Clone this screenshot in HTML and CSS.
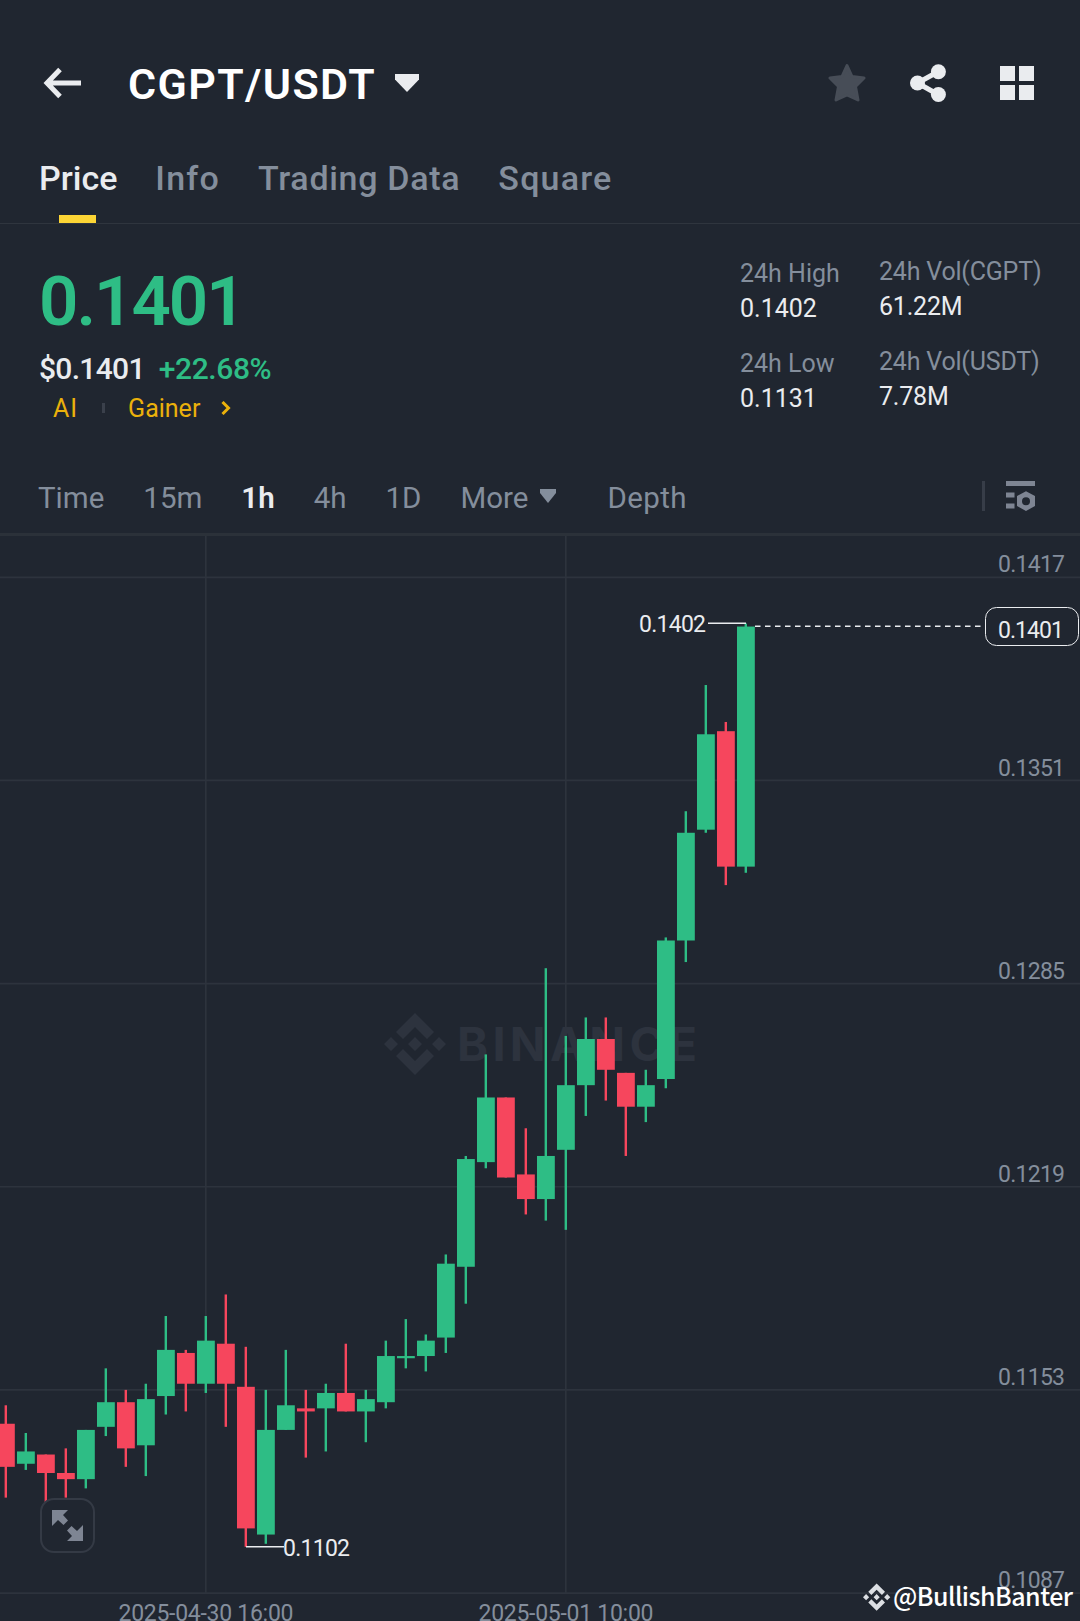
FILE: index.html
```html
<!DOCTYPE html>
<html lang="en">
<head>
    <meta charset="UTF-8">
    <meta name="viewport" content="width=device-width, initial-scale=1.0">
    <title>CGPT/USDT</title>
    <link rel="stylesheet" href="styles.css">
</head>

<body>
    <header class="topbar">
        <svg class="back" width="38" height="32" viewBox="0 0 38 32">
            <path d="M17 2.500 4 16l13 13.500M4 16h34" fill="none" stroke="#eaecef" stroke-width="5"/>
        </svg>
        <h1 class="pair">CGPT/USDT</h1>
        <svg class="pair-caret" width="24" height="18" viewBox="0 0 24 18">
            <path d="M0 0h24v5.500L12 18 0 5.500z" fill="#eaecef"/>
        </svg>
        <div class="actions">
            <svg width="38" height="40" viewBox="0 0 38 40">
                <path d="M19 2.500 24 13.500 36 15 27.500 23.500 30 37 19 32 8 37 10.500 23.500 2 15 14 13.500z" fill="#474d57" stroke="#474d57" stroke-width="3" stroke-linejoin="round"/>
            </svg>
            <svg width="38" height="40" viewBox="0 0 38 40">
                <path d="M29 8.700 8.500 20 29 31.500" fill="none" stroke="#eaecef" stroke-width="5"/>
                <circle cx="29.400" cy="8.700" r="7.500" fill="#eaecef"/>
                <circle cx="8.500" cy="20" r="7.500" fill="#eaecef"/>
                <circle cx="29.400" cy="31.500" r="7.500" fill="#eaecef"/>
            </svg>
            <svg class="layout" width="34" height="34" viewBox="0 0 34 34">
                <path d="M0 0h15v15H0zM19 0h15v15H19zM0 19h15v15H0zM19 19h15v15H19z" fill="#eaecef"/>
            </svg>
        </div>
    </header>

    <nav class="tabs">
        <a class="tab active">Price</a>
        <a class="tab info">Info</a>
        <a class="tab">Trading Data</a>
        <a class="tab square">Square</a>
    </nav>

    <section class="ticker">
        <div class="quote">
            <div class="last-price">0.1401</div>
            <div class="sub-price">
                <span class="usd">$0.1401</span>
                <span class="change">+22.68%</span>
            </div>
            <div class="tags">
                <span class="tag-ai">AI</span>
                <i class="tag-divider"></i>
                <span class="tag-gainer">Gainer</span>
                <svg width="10" height="14" viewBox="0 0 10 14">
                    <path d="M1.500 1 7.500 7l-6 6" fill="none" stroke="#ebb10b" stroke-width="3"/>
                </svg>
            </div>
        </div>
        <div class="stats">
            <div class="stat-col">
                <p class="label">24h High</p>
                <p class="value">0.1402</p>
                <p class="label">24h Low</p>
                <p class="value">0.1131</p>
            </div>
            <div class="stat-col vol">
                <p class="label">24h Vol(CGPT)</p>
                <p class="value">61.22M</p>
                <p class="label">24h Vol(USDT)</p>
                <p class="value">7.78M</p>
            </div>
        </div>
    </section>

    <div class="intervals">
        <span>Time</span>
        <span>15m</span>
        <span class="active">1h</span>
        <span>4h</span>
        <span>1D</span>
        <span class="more">More
            <svg width="16" height="14" viewBox="0 0 16 14">
                <path d="M0 0h16v4L8 14 0 4z" fill="#848e9c"/>
            </svg>
        </span>
        <span class="depth">Depth</span>
        <div class="tools">
            <i class="divider"></i>
            <svg width="30" height="30" viewBox="0 0 30 30">
                <path d="M0 0h29v5H0zM0 11.500h8.500v5H0zM0 22.500h8.500v5H0z" fill="#7e8593"/>
                <path d="M20 10.200 29 15v10l-9 5-9-5V15zM20 16.200a4 4 0 1 0 0 8 4 4 0 0 0 0-8z" fill="#7e8593" fill-rule="evenodd"/>
            </svg>
        </div>
    </div>

    <main class="chart">
        <svg width="1080" height="1085" viewBox="0 536 1080 1085">
            <g id="grid" class="grid"></g>
            <g class="watermark">
                <path d="M415 1013l19 19-7 7-12-12-12 12-7-7zM415 1075l19-19-7-7-12 12-12-12-7 7zM391 1037l7 7-7 7-7-7zM439 1037l7 7-7 7-7-7zM415 1037l7 7-7 7-7-7z"/>
                <text x="457" y="1061" textLength="240">BINANCE</text>
            </g>
            <g id="candles"></g>
            <g id="axis" class="axis"></g>
            <g class="marks">
                <path d="M708 623.300h38M246 1546.800h38"/>
                <path d="M755 626.300h230" class="dashed"/>
                <text x="639" y="632" textLength="67">0.1402</text>
                <text x="283" y="1556" textLength="67">0.1102</text>
                <rect x="985.500" y="607.500" width="93" height="38" rx="11"/>
                <text x="998" y="638" textLength="66">0.1401</text>
            </g>
            <g class="expand">
                <rect x="41" y="1499" width="53" height="53" rx="13"/>
                <path d="M52 1510h16l-5 5 5 5.500-4.500 4.500-5.500-5-6 6zM83 1541h-16l5-5-5-5.500 4.500-4.500 5.500 5 6-6z"/>
            </g>
            <g class="author">
                <path transform="translate(863 1583.500) scale(.44)" d="M31 0l19 19-7 7-12-12-12 12-7-7zM31 62l19-19-7-7-12 12-12-12-7 7zM7 24l7 7-7 7-7-7zM55 24l7 7-7 7-7-7zM31 24l7 7-7 7-7-7z"/>
                <text x="893" y="1606" textLength="180">@BullishBanter</text>
            </g>
        </svg>
    </main>

    <script>
        // [open, high, low, close] in ticks of 0.0001
        const candles = [
            [1142, 1148, 1118, 1128], [1129, 1139, 1127, 1133], [1132, 1132, 1114, 1126],
            [1126, 1134, 1118, 1124], [1124, 1140, 1121, 1140], [1141, 1160, 1138, 1149],
            [1149, 1153, 1128, 1134], [1135, 1155, 1125, 1150], [1151, 1177, 1145, 1166],
            [1165, 1166, 1146, 1155], [1155, 1177, 1152, 1169], [1168, 1184, 1141, 1155],
            [1154, 1167, 1102, 1108], [1106, 1153, 1103, 1140], [1140, 1166, 1140, 1148],
            [1147, 1153, 1131, 1146], [1147, 1155, 1133, 1152], [1152, 1168, 1146, 1146],
            [1146, 1153, 1136, 1150], [1149, 1169, 1147, 1164], [1164, 1176, 1160, 1164],
            [1164, 1171, 1159, 1169], [1170, 1197, 1165, 1194], [1193, 1229, 1181, 1228],
            [1227, 1262, 1225, 1248], [1248, 1248, 1222, 1222], [1223, 1238, 1210, 1215],
            [1215, 1290, 1208, 1229], [1231, 1268, 1205, 1252], [1252, 1274, 1242, 1267],
            [1267, 1274, 1247, 1257], [1256, 1256, 1229, 1245], [1245, 1257, 1240, 1252],
            [1254, 1300, 1251, 1299], [1299, 1341, 1292, 1334], [1335, 1382, 1334, 1366],
            [1367, 1370, 1317, 1323], [1323, 1402, 1321, 1401]
        ];

        const y = tick => 577.3 + (1417 - tick) * 3.078;

        let bars = '';
        candles.forEach(([open, high, low, close], i) => {
            const x = 5.8 + i * 20;
            const color = close >= open ? '#2ebd85' : '#f6465d';
            const top = y(Math.max(open, close));
            const height = Math.max(2.2, y(Math.min(open, close)) - top);
            bars += `<rect x="${x - 1.2}" y="${y(high)}" width="2.4" height="${y(low) - y(high)}" fill="${color}"/>`;
            bars += `<rect x="${x - 8.8}" y="${top}" width="17.8" height="${height}" fill="${color}"/>`;
        });
        document.getElementById('candles').innerHTML = bars;

        let grid = '<path d="M205.800 536V1593M565.800 536V1593"/>';
        let axis = '';
        for (let tick = 1417; tick >= 1087; tick -= 66) {
            grid += `<path d="M0 ${y(tick)}H1080"/>`;
            axis += `<text x="998" y="${y(tick) - 4.9}" textLength="67">0.${tick}</text>`;
        }
        axis += '<text x="118.500" y="1621" textLength="175">2025-04-30 16:00</text>';
        axis += '<text x="478.500" y="1621" textLength="175">2025-05-01 10:00</text>';
        document.getElementById('grid').innerHTML = grid;
        document.getElementById('axis').innerHTML = axis;
    </script>
</body>

</html>
```
FILE: styles.css
```css
* {
    box-sizing: border-box;
}

body {
    margin: 0;
    width: 1080px;
    height: 1621px;
    overflow: hidden;
    background-color: #202630;
    color: #eaecef;
    font-family: Roboto, "Liberation Sans", sans-serif;
}

h1, p {
    margin: 0;
}

svg {
    display: block;
    flex: none;
}

.topbar {
    display: flex;
    align-items: center;
    height: 148px;
    padding: 18px 46px 0 43px;
}

.pair {
    width: 267px;
    padding-top: 2px;
    margin-left: 47px;
    font-size: 43px;
    font-weight: 600;
    letter-spacing: 1.4px;
    color: #fff;
    white-space: nowrap;
}

.actions {
    display: flex;
    align-items: center;
    margin-left: auto;
    gap: 43px;
}

.layout {
    margin-left: 10px;
}

.tabs {
    display: flex;
    height: 76px;
    padding-left: 39px;
    gap: 38px;
    border-bottom: 1px solid #2f353e;
    font-size: 34px;
    font-weight: 500;
    line-height: 60px;
    letter-spacing: 0.7px;
    color: #848e9c;
    white-space: nowrap;
}

.tab.active {
    display: flex;
    flex-direction: column;
    justify-content: space-between;
    letter-spacing: 0;
    color: #eaecef;
}

.tab.info, .tab.square {
    letter-spacing: 1.2px;
}

.tab.active::after {
    content: "";
    width: 37px;
    height: 8px;
    margin: 0 auto 0 20px;
    background-color: #fcd535;
}

.ticker {
    display: flex;
    justify-content: space-between;
    height: 235px;
    padding: 32px 0 0 39px;
}

.last-price {
    margin-top: 5px;
    font-size: 69px;
    line-height: 82px;
    font-weight: 600;
    color: #2ebd85;
    letter-spacing: -2px;
}

.sub-price {
    display: flex;
    gap: 14px;
    padding-top: 1px;
    font-size: 30px;
    line-height: 50px;
    font-weight: 500;
    letter-spacing: -0.7px;
}

.change {
    color: #2ebd85;
    letter-spacing: -0.4px;
}

.tags {
    display: flex;
    align-items: center;
    height: 28px;
    padding-left: 14px;
    font-size: 25px;
    color: #ebb10b;
}

.tag-ai {
    letter-spacing: 1px;
}

.tag-divider {
    width: 3px;
    height: 10px;
    margin: 0 23px 0 24px;
    background-color: #3a404b;
}

.tags svg {
    margin-left: 21px;
}

.stats {
    display: flex;
}

.stat-col {
    width: 139px;
    font-size: 25px;
    line-height: 35px;
    white-space: nowrap;
}

.stat-col.vol {
    width: 201px;
    margin-top: -2px;
    letter-spacing: -0.2px;
}

.label {
    color: #848e9c;
}

.value {
    margin-bottom: 20px;
}

.intervals {
    display: flex;
    align-items: center;
    gap: 39px;
    height: 77px;
    padding: 3px 44px 0 38px;
    border-bottom: 3px solid #2b3139;
    font-size: 29.5px;
    color: #848e9c;
}

.intervals .active {
    font-weight: 600;
    color: #eaecef;
}

.more {
    display: flex;
    gap: 12px;
}

.more svg {
    margin-top: 8px;
}

.depth {
    margin-left: 12px;
    letter-spacing: 0.4px;
}

.tools {
    display: flex;
    gap: 21px;
    margin: 0 0 3px auto;
}

.divider {
    width: 3px;
    height: 30px;
    background-color: #373d48;
}

.grid path {
    stroke: #2d333d;
    stroke-width: 1.7;
}

.watermark {
    fill: #2d333e;
    font-family: Inter, sans-serif;
    font-size: 47px;
    font-weight: 700;
}

.axis {
    fill: #848e9c;
    font-size: 23px;
}

.marks {
    fill: #eaecef;
    font-size: 23px;
}

.marks path {
    stroke: #eaecef;
    stroke-width: 1.5;
}

.marks .dashed {
    stroke-dasharray: 5.5 4.5;
}

.marks rect {
    fill: #202630;
    stroke: #eaecef;
}

.expand {
    fill: #7e8593;
}

.expand rect {
    fill: #202630;
    stroke: #343a45;
    stroke-width: 2;
}

.author {
    fill: #dcdfe3;
}

.author text {
    font-family: "Noto Sans CJK SC", sans-serif;
    font-size: 25px;
    font-weight: 500;
    fill: #fff;
}
```
